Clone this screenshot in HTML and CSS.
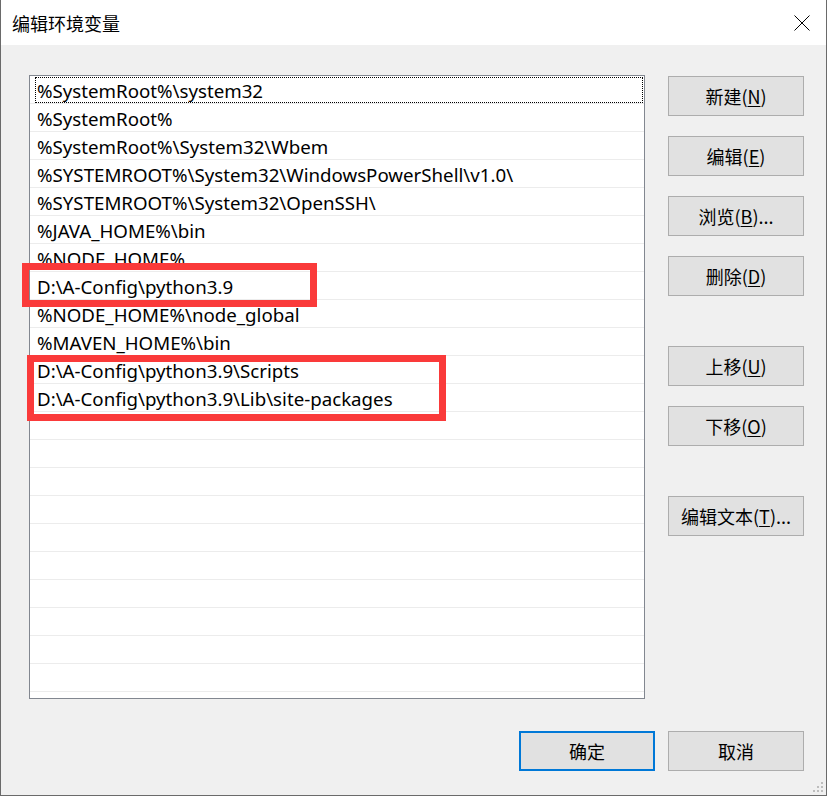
FILE: index.html
```html
<!DOCTYPE html>
<html lang="zh-CN">
<head>
  <meta charset="UTF-8" />
  <title>编辑环境变量</title>
  <link rel="stylesheet" href="styles.css">
</head>
<body>

  <div class="window">
    <div class="titlebar">
      <span class="title">编辑环境变量</span>
      <span class="close">
        <svg width="16" height="16" viewBox="0 0 16 16">
          <path d="M0.5 0.5 L15.5 15.5 M15.5 0.5 L0.5 15.5" stroke="#000" stroke-width="1" fill="none"/>
        </svg>
      </span>
    </div>

    <div class="content">
      <div class="main">
        <!-- path entries -->
        <div class="list">
          <div class="row focus">%SystemRoot%\system32</div>
          <div class="row">%SystemRoot%</div>
          <div class="row">%SystemRoot%\System32\Wbem</div>
          <div class="row">%SYSTEMROOT%\System32\WindowsPowerShell\v1.0\</div>
          <div class="row">%SYSTEMROOT%\System32\OpenSSH\</div>
          <div class="row">%JAVA_HOME%\bin</div>
          <div class="row">%NODE_HOME%</div>
          <div class="row">D:\A-Config\python3.9</div>
          <div class="row">%NODE_HOME%\node_global</div>
          <div class="row">%MAVEN_HOME%\bin</div>
          <div class="row">D:\A-Config\python3.9\Scripts</div>
          <div class="row">D:\A-Config\python3.9\Lib\site-packages</div>
          <div class="row"></div>
          <div class="row"></div>
          <div class="row"></div>
          <div class="row"></div>
          <div class="row"></div>
          <div class="row"></div>
          <div class="row"></div>
          <div class="row"></div>
          <div class="row"></div>
          <div class="row"></div>
        </div>

        <div class="side">
          <button class="btn">新建(<u>N</u>)</button>
          <button class="btn">编辑(<u>E</u>)</button>
          <button class="btn">浏览(<u>B</u>)...</button>
          <button class="btn">删除(<u>D</u>)</button>
          <button class="btn spaced">上移(<u>U</u>)</button>
          <button class="btn">下移(<u>O</u>)</button>
          <button class="btn spaced">编辑文本(<u>T</u>)...</button>
        </div>
      </div>

      <div class="footer">
        <button class="btn default">确定</button>
        <button class="btn">取消</button>
      </div>
    </div>

    <!-- red annotation boxes -->
    <div class="mark mark-one"></div>
    <div class="mark mark-two"></div>

    <svg class="grip" width="10" height="10" viewBox="0 0 10 10">
      <rect x="8" y="0" width="2" height="2" fill="#bdbdbd"/>
      <rect x="4" y="4" width="2" height="2" fill="#bdbdbd"/>
      <rect x="8" y="4" width="2" height="2" fill="#bdbdbd"/>
      <rect x="0" y="8" width="2" height="2" fill="#bdbdbd"/>
      <rect x="4" y="8" width="2" height="2" fill="#bdbdbd"/>
      <rect x="8" y="8" width="2" height="2" fill="#bdbdbd"/>
    </svg>
  </div>

</body>
</html>
```

FILE: styles.css
```css
* {
  box-sizing: border-box;
  margin: 0;
  padding: 0;
}

body {
  font-family: 'Noto Sans', 'Noto Sans CJK SC', sans-serif;
  background-color: #f0f0f0;
  color: #000;
}

.window {
  position: relative;
  width: 827px;
  height: 796px;
  border-left: 1px solid #6a6a6a;
  border-right: 1px solid #6a6a6a;
  border-bottom: 1px solid #6a6a6a;
  background-color: #f0f0f0;
  overflow: hidden;
}

.titlebar {
  height: 45px;
  background-color: #fff;
  display: flex;
  align-items: center;
  justify-content: space-between;
  padding: 0 16px 0 11px;
}

.title {
  font-family: 'Noto Sans CJK SC', sans-serif;
  font-size: 18px;
  line-height: 1;
}

.close {
  display: flex;
  margin-top: 1px;
}

.content {
  padding: 30px 22px 0 28px;
}

.main {
  display: flex;
  gap: 23px;
}

.list {
  width: 616px;
  height: 624px;
  border: 1px solid #828790;
  background-color: #fff;
  overflow: hidden;
}

.row {
  position: relative;
  height: 28px;
  border-bottom: 1px solid #ececec;
  padding-left: 7px;
  font-size: 18.7px;
  line-height: 30px;
  white-space: nowrap;
}

.row.focus::before {
  content: "";
  position: absolute;
  left: 5px;
  right: 1px;
  top: 1px;
  bottom: 0;
  border: 1px dotted #000;
}

.side {
  width: 136px;
  margin-top: 1px;
  display: flex;
  flex-direction: column;
  gap: 20px;
}

.btn {
  width: 136px;
  height: 40px;
  border: 1px solid #adadad;
  background-color: #e1e1e1;
  font-family: 'Noto Sans CJK SC', sans-serif;
  font-size: 18px;
  color: #000;
  text-align: center;
}

.btn u {
  text-underline-offset: 2px;
}

.side .spaced {
  margin-top: 30px;
}

.footer {
  display: flex;
  justify-content: flex-end;
  gap: 13px;
  margin-top: 32px;
}

.btn.default {
  border: 2px solid #0078d7;
}

.mark {
  position: absolute;
  border: 7px solid #fa3a3a;
}

.mark-one {
  left: 21px;
  top: 263px;
  width: 295px;
  height: 44px;
}

.mark-two {
  left: 26px;
  top: 355px;
  width: 419px;
  height: 66px;
}

.grip {
  position: absolute;
  right: 3px;
  bottom: 3px;
}
```
